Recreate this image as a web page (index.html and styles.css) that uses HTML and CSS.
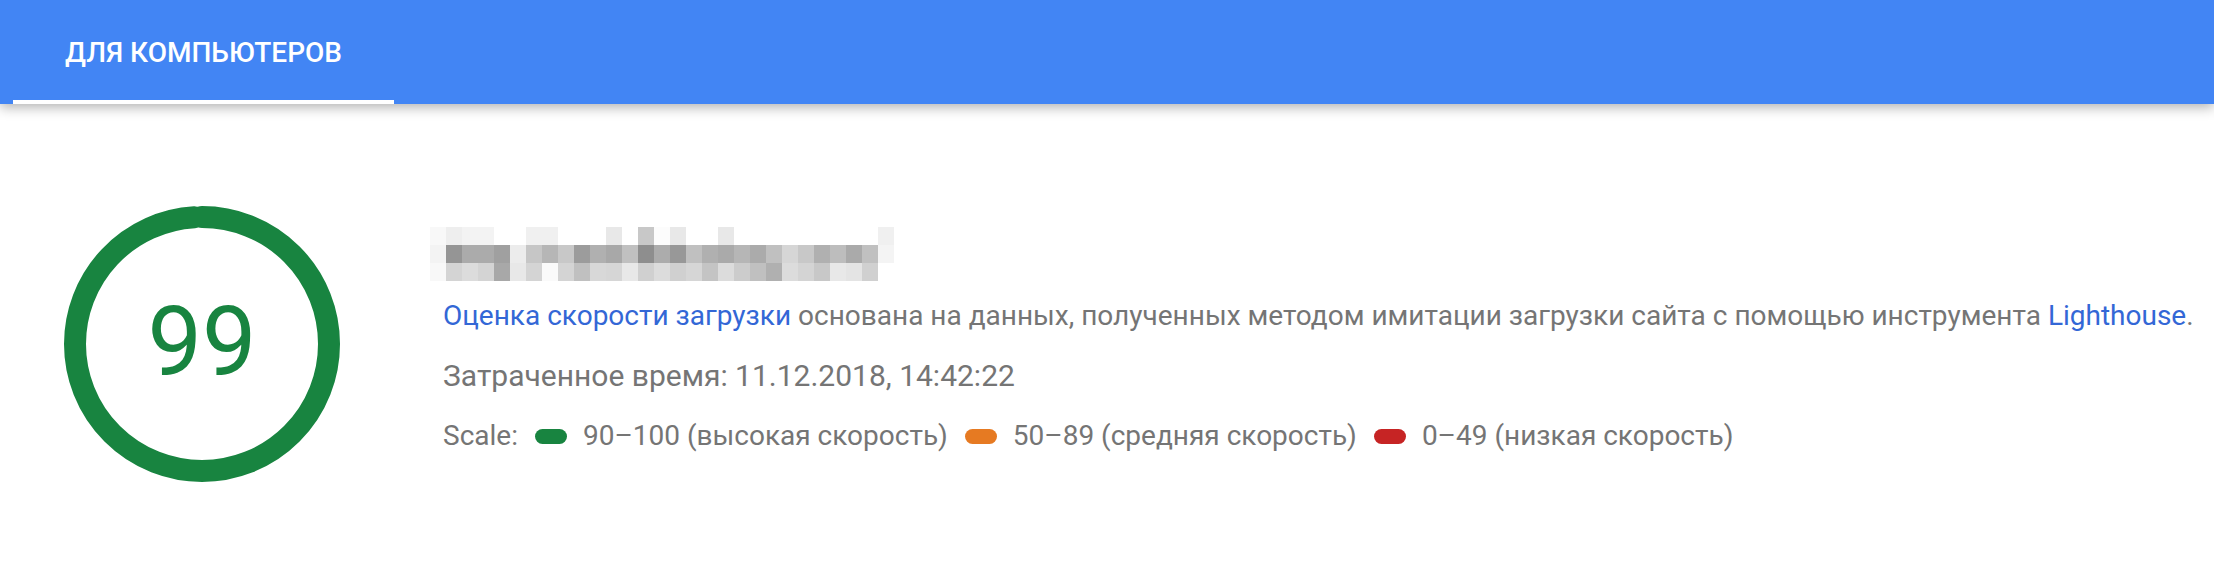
FILE: index.html
```html
<!DOCTYPE html>
<html lang="ru-RU">
	<head>
		<meta charset="UTF-8" />
		<meta name="viewport" content="initial-scale=1,width=device-width" />
		<title>PageSpeed Insights</title>
		<link rel="stylesheet" href="styles.css">
	</head>

	<body>
		<header class="top-bar">
			<div class="tab tab_active">Для компьютеров</div>
		</header>

		<main class="report">
			<div class="gauge">
				<svg class="gauge__svg" viewBox="0 0 276 276">
					<circle class="gauge__arc" cx="138" cy="138" r="127" transform="rotate(-90 138 138)" />
				</svg>
				<span class="gauge__value">99</span>
			</div>

			<div class="summary">
				<div class="summary__url" id="url-mosaic"></div>
				<p class="summary__line">
					<a class="summary__link" href="#">Оценка скорости загрузки</a> основана на данных, полученных методом имитации загрузки сайта с помощью инструмента <a class="summary__link" href="#">Lighthouse</a>.
				</p>
				<p class="summary__line summary__time">Затраченное время: 11.12.2018, 14:42:22</p>
				<p class="summary__line summary__scale">
					Scale:
					<span class="legend legend_fast">90–100 (высокая скорость)</span>
					<span class="legend legend_average">50–89 (средняя скорость)</span>
					<span class="legend legend_slow">0–49 (низкая скорость)</span>
				</p>
			</div>
		</main>

		<script>
			// blurred url, one grey value per cell
			const mosaic = [
				"f8 ee f3 f3 ff ff f0 f0 ff ff ff e8 ff c8 fc e8 ff ff e8 ff ff ff ff ff ff ff ff ff f0",
				"f3 95 ab ab a0 ec c6 b6 c8 9c b0 a8 c0 8e ac 98 c0 b0 aa b6 ab c0 d6 c8 b0 bd aa c0 f4",
				"f8 d4 dc d4 a8 e8 d4 fa d4 c0 d8 d6 e8 d0 dc d0 d6 c4 dc cc c0 b0 dc d4 c8 e8 e4 d0 ff",
			];
			const box = document.getElementById("url-mosaic");
			mosaic.forEach((row) => {
				row.split(" ").forEach((v) => {
					const cell = document.createElement("span");
					cell.className = "summary__cell";
					cell.style.backgroundColor = "#" + v + v + v;
					box.appendChild(cell);
				});
			});
		</script>
	</body>
</html>
```

FILE: styles.css
```css
html {
	box-sizing: border-box;
}

*,
*::after,
*::before {
	box-sizing: inherit;
}

body {
	padding: 0;
	margin: 0;
	font-family: Roboto, "Liberation Sans", sans-serif;
	font-size: 28px;
	font-weight: 400;
	color: #757575;
	background-color: white;
	-webkit-font-smoothing: antialiased;
}

.top-bar {
	position: relative;
	z-index: 2;
	display: flex;
	height: 104px;
	padding-left: 13px;
	background-color: #4285f4;
	box-shadow: 0 3px 12px rgb(0 0 0 / 32%);
}

.tab {
	display: flex;
	align-items: center;
	justify-content: center;
	width: 381px;
	font-size: 28px;
	font-weight: 500;
	color: white;
	text-transform: uppercase;
}

.tab_active {
	border-bottom: 4px solid white;
	padding-top: 4px;
}

.report {
	display: flex;
	align-items: flex-start;
	padding: 102px 0 0 64px;
}

.gauge {
	display: grid;
	place-items: center;
	width: 276px;
	height: 276px;
	flex-shrink: 0;
}

.gauge__svg,
.gauge__value {
	grid-area: 1 / 1;
}

.gauge__svg {
	width: 276px;
	height: 276px;
}

.gauge__arc {
	fill: none;
	stroke: #188440;
	stroke-width: 22;
	stroke-linecap: round;
	stroke-dasharray: 790 798;
}

.gauge__value {
	font-size: 97px;
	line-height: 1;
	color: #188440;
	margin-top: -4px;
}

.summary {
	margin-left: 103px;
	padding-top: 21px;
}

.summary__url {
	display: grid;
	grid-template-columns: repeat(29, 16px);
	grid-auto-rows: 18px;
	margin-left: -13px;
	margin-bottom: 5px;
}

.summary__line {
	margin: 0;
	line-height: 60px;
	white-space: nowrap;
}

.summary__time {
	font-size: 30px;
}

.summary__link {
	color: #3367d6;
	text-decoration: none;
}

.summary__scale {
	display: flex;
	align-items: center;
}

.legend {
	display: inline-flex;
	align-items: center;
}

.legend::before {
	content: "";
	width: 32px;
	height: 15px;
	border-radius: 8px;
	margin: 0 16px 0 17px;
}

.legend_fast::before {
	background-color: #188440;
}

.legend_average::before {
	background-color: #e67a22;
}

.legend_slow::before {
	background-color: #c62424;
}
```
